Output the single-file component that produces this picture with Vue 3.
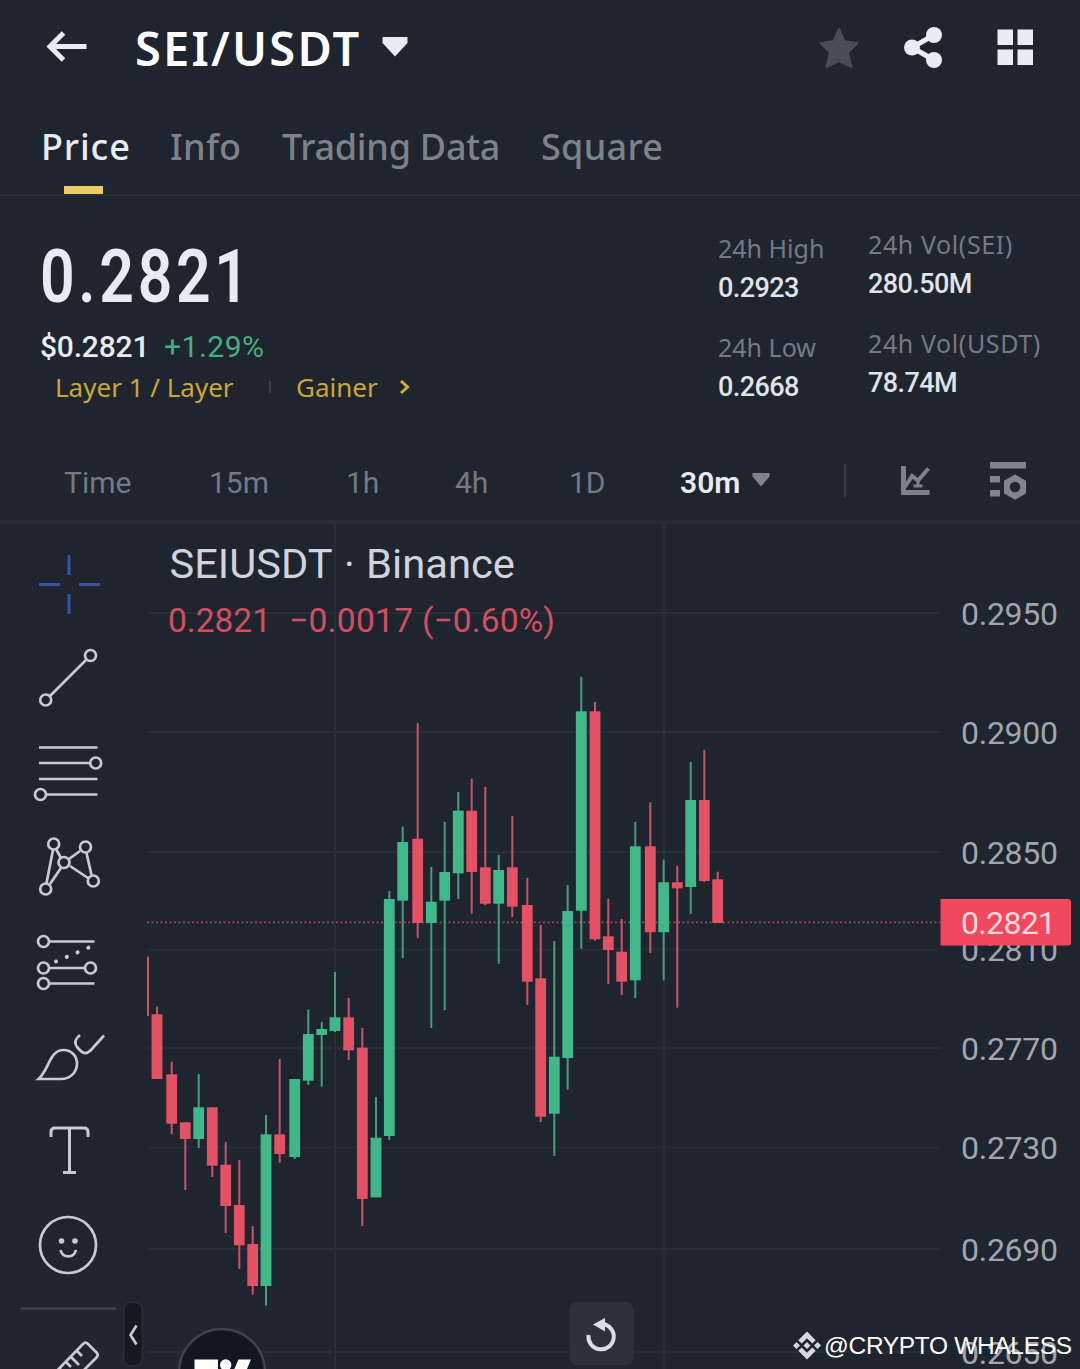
<script setup>
const tabs = ['Price', 'Info', 'Trading Data', 'Square']
const frames = ['Time', '15m', '1h', '4h', '1D']
const stats = [
  [['24h High', '0.2923'], ['24h Low', '0.2668']],
  [['24h Vol(SEI)', '280.50M'], ['24h Vol(USDT)', '78.74M']],
]
const levels = [
  ['0.2950', 613], ['0.2900', 732], ['0.2850', 852], ['0.2810', 949.5],
  ['0.2770', 1048], ['0.2730', 1147.5], ['0.2690', 1249], ['0.2650', 1352],
]
// [x, high, body top, body bottom, low, rising]
const candles = [
  [157, 1006.7, 1014.3, 1079, 1079, 0], [171.7, 1061.7, 1074.3, 1123.7, 1134.3, 0],
  [185.3, 1122.3, 1122.3, 1139, 1190, 0], [198.7, 1074, 1107.3, 1139, 1148, 1],
  [212.3, 1107.3, 1107.3, 1165.7, 1177, 0], [225.7, 1142, 1164.7, 1206, 1233, 0],
  [239.3, 1160, 1205, 1245.3, 1269, 0], [252.7, 1226, 1244, 1286, 1294.7, 0],
  [266, 1115, 1134.3, 1286, 1305.5, 1], [279.7, 1059, 1134.3, 1154, 1162.7, 0],
  [294.7, 1079, 1079, 1157, 1159, 1], [308.3, 1009.5, 1034, 1080.7, 1085, 1],
  [321.7, 1022, 1029, 1035, 1086.7, 1], [335, 972, 1017.3, 1031, 1032, 1],
  [348.7, 998, 1017.3, 1050.3, 1060, 0], [362.3, 1027.7, 1047.7, 1199, 1226, 0],
  [376, 1097, 1137.7, 1197.3, 1197.3, 1], [389.3, 891, 899, 1136, 1140, 1],
  [402.7, 826.7, 842, 900.7, 958, 1], [417.7, 723, 838.7, 923, 938, 0],
  [431.3, 867, 901.7, 923, 1028, 1], [444.7, 822, 872, 900.7, 1010, 1],
  [458.3, 792, 810.7, 873.3, 899, 1], [471.7, 778.7, 810.7, 872, 913.7, 0],
  [485.3, 787, 867.3, 903.7, 905, 0], [498.7, 855, 870, 903.7, 963.7, 1],
  [512.3, 816, 867.3, 906.7, 917, 0], [527.3, 878, 905, 981.7, 1005, 0],
  [540.7, 925, 978.3, 1116.7, 1122, 0], [554.3, 941, 1056.7, 1113.7, 1156, 1],
  [567.7, 885, 911, 1058, 1089.7, 1], [581.3, 676.7, 711.3, 910.7, 948.7, 1],
  [595, 702, 711.3, 939.3, 940.7, 0], [608.3, 898.7, 936.3, 950, 984, 0],
  [621.7, 919, 951.7, 981.7, 995, 0], [635.3, 822, 846.3, 980.3, 998, 1],
  [650.3, 802.3, 846.3, 932.3, 953, 0], [663.7, 859.7, 882.3, 932.3, 980.3, 1],
  [677.3, 865.7, 882.3, 888.3, 1007.7, 0], [690.7, 762, 800, 887, 914, 1],
  [704.3, 750, 800, 881, 882, 0], [717.7, 871.7, 879.3, 923, 923, 0],
]
</script>

<template>
  <div class="screen">
    <header class="topbar">
      <svg class="back" width="42" height="36" viewBox="46 29 42 36"><path d="M86.500 46.500H50M63.500 33 50 46.500l13.500 13.500" fill="none" stroke="#e9ebf2" stroke-width="5" /></svg>
      <h1>SEI/USDT</h1>
      <svg class="caret" width="26" height="20" viewBox="0 0 26 20"><path d="M0.500 0h25v6L13 19.500.500 6z" fill="#e9ebf2" /></svg>
      <svg class="star" width="42" height="42" viewBox="0 0 42 42"><path d="M21 2l5.500 12.300 13 1.700-9.500 9.500 3.500 14.500L21 34 8.500 40l3.500-14.500L2.500 16l13-1.700z" fill="#474d57" stroke="#474d57" stroke-width="2" stroke-linejoin="round" /></svg>
      <svg class="share" width="40" height="42" viewBox="902 25 40 42">
        <path d="M933 34 911 46.500l22 12.500" fill="none" stroke="#eaecf3" stroke-width="5" />
        <g fill="#eaecf3"><circle cx="933" cy="34" r="8" /><circle cx="911" cy="46.500" r="8" /><circle cx="933" cy="59" r="8" /></g>
      </svg>
      <svg class="apps" width="37" height="37" viewBox="0 0 37 37" fill="#e9ebf5"><path d="M0.500.500H16V16H.500zM20.500.500H36V16H20.500zM.500 20.500H16V36H.500zM20.500 20.500H36V36H20.500z" /></svg>
    </header>

    <nav class="tabs">
      <div v-for="(t, i) in tabs" :key="t" class="tab" :class="{ active: i === 0, tight: i === 2 }"><span>{{ t }}</span><i v-if="i === 0"></i></div>
    </nav>

    <section class="summary">
      <div class="quote">
        <div class="price"><b>0.2821</b></div>
        <div class="change"><span class="usd">$0.2821</span><span class="pct">+1.29%</span></div>
        <div class="tags">
          <span class="layer">Layer 1 / Layer</span><i></i><span class="gainer">Gainer</span>
          <svg width="12" height="16" viewBox="0 0 12 16"><path d="M2 2l6.500 6L2 14" fill="none" stroke="#d9ae2c" stroke-width="3" /></svg>
        </div>
      </div>
      <div v-for="(col, c) in stats" :key="c" class="stats" :class="'col' + c">
        <div v-for="s in col" :key="s[0]" class="stat"><div class="label">{{ s[0] }}</div><div class="value">{{ s[1] }}</div></div>
      </div>
    </section>

    <nav class="frames">
      <span v-for="f in frames" :key="f">{{ f }}</span>
      <b>30m</b>
      <svg class="fcaret" width="18" height="14" viewBox="0 0 18 14"><path d="M.500 0h17v3.500L9 13.500.500 3.500z" fill="#7d838d" /></svg>
      <i></i>
      <svg width="32" height="34" viewBox="899 463 32 34" fill="none" stroke="#7b818b">
        <path d="M903.500 465v26.500h26" stroke-width="5" />
        <path d="M905 486l7-11 6 4.500 10.500-12" stroke-width="4" />
        <path d="M918 478v7m-4.500 0h9" stroke-width="3" />
      </svg>
      <svg width="38" height="42" viewBox="989 460 38 42" fill="#7f858f">
        <path d="M990 462h36v6.500h-36zM990 476h10v6.500h-10zM990 490h10v6.500h-10z" />
        <path fill-rule="evenodd" d="M1015 474.500l11 6.300v12.700l-11 6.300-11-6.300v-12.700zM1015 481.800a5.200 5.200 0 1 0 0 10.400 5.200 5.200 0 0 0 0-10.400z" />
      </svg>
    </nav>

    <main class="workspace">
      <aside class="tools">
        <svg width="140" height="108" viewBox="0 524 140 108" class="cross"><path d="M69 555v20M69 594v20M39 584.500h21M79 584.500h21" /></svg>
        <svg width="140" height="93" viewBox="0 632 140 93"><path d="M50 696 86 660" /><circle cx="45.700" cy="700" r="5.500" /><circle cx="90.500" cy="655.500" r="5.500" /></svg>
        <svg width="140" height="95" viewBox="0 725 140 95"><path d="M39 747.500h58.500M39 763h51M39 779h58.500M46 794.500h51.500" /><circle cx="95.700" cy="763" r="5.500" /><circle cx="40.500" cy="794.500" r="5.500" /></svg>
        <svg width="140" height="95" viewBox="0 820 140 95"><path d="M53 850l-6.500 33M56 849l5 9M50 884l11-16M69 859l11-8M86.500 853l5 22M70 866l18 12" /><circle cx="53.700" cy="844" r="5.500" /><circle cx="85.500" cy="847" r="5.500" /><circle cx="64" cy="862.500" r="5.500" /><circle cx="45.700" cy="889" r="5.500" /><circle cx="93.300" cy="881" r="5.500" /></svg>
        <svg width="140" height="95" viewBox="0 915 140 95">
          <path d="M49 941.500h45.500M49 968h36M49 983.500h45.500" /><path d="M56 961.500 90 947" stroke-dasharray="0.100 11.600" stroke-width="4" stroke-linecap="round" />
          <circle cx="43.500" cy="941.500" r="5.500" /><circle cx="43.500" cy="968" r="5.500" /><circle cx="90.500" cy="968" r="5.500" /><circle cx="43.500" cy="983.500" r="5.500" />
        </svg>
        <svg width="140" height="95" viewBox="0 1010 140 95"><path d="M38.500 1079c11-10 11-29 25-29 8 0 13.500 6 13.500 13.500 0 9-7 15.500-16 15.500zM80 1035c-5 4-6 8-3 12 6 7 9 8 14 3l13-14.500" /></svg>
        <svg width="140" height="95" viewBox="0 1105 140 95"><path d="M51 1137v-5q0-4 4-4h29q4 0 4 4v5M69.500 1128v44.500M63 1172.500h13" stroke-width="3" /></svg>
        <svg width="140" height="90" viewBox="0 1200 140 90"><circle cx="68" cy="1245" r="28" /><path d="M60.500 1250c2 8.500 13.500 8.500 15.500 0" /><g fill="#c6cad4" stroke="none"><circle cx="61.500" cy="1241" r="2.800" /><circle cx="75" cy="1241" r="2.800" /></g></svg>
        <svg class="foot" width="140" height="79" viewBox="0 1290 140 79">
          <path d="M21 1308.500h95" stroke="#444a54" stroke-width="2" />
          <path d="M46 1382l37-38q2.500-2.500 5 0l8.500 8.500q2.500 2.500 0 5l-37 37M60 1369l7 7M66 1362l5 5M71 1357l8 8M77 1351l5 5" />
          <rect x="123.500" y="1302" width="19" height="64" rx="8" fill="#121920" stroke="#262d37" stroke-width="2" />
          <path d="M136.500 1325.500l-6 9.500 6 9.500" />
        </svg>
      </aside>

      <svg class="chart" width="940" height="845" viewBox="140 524 940 845">
        <g stroke="#262d37" stroke-width="2">
          <path d="M335 524v845M664 524v845" />
          <path v-for="l in levels" :key="l[0]" :d="`M148 ${l[1]}H940`" />
        </g>
        <path d="M147 922.300H940" stroke="#a04858" stroke-width="1.800" stroke-dasharray="2 2.500" />
        <path d="M148 956.500v59.500" stroke="#cf5063" stroke-width="2" />
        <g v-for="c in candles" :key="c[0]" :class="c[5] ? 'up' : 'down'">
          <path :d="`M${c[0]} ${c[1]}V${c[4]}`" />
          <rect :x="c[0] - 5.400" :y="c[2]" width="10.800" :height="c[3] - c[2]" />
        </g>
        <g class="name">
          <text x="169.500" y="578" textLength="163" lengthAdjust="spacingAndGlyphs">SEIUSDT</text>
          <text x="344" y="578">·</text>
          <text x="366" y="578" textLength="149" lengthAdjust="spacingAndGlyphs">Binance</text>
        </g>
        <g class="delta">
          <text x="168" y="632" textLength="103">0.2821</text>
          <text x="289" y="632" textLength="124">−0.0017</text>
          <text x="422" y="632" textLength="133">(−0.60%)</text>
        </g>
        <g class="axis">
          <text v-for="l in levels" :key="l[0]" x="961" :y="l[1] + 11.700" textLength="97">{{ l[0] }}</text>
        </g>
        <path d="M940.500 899H1068q3 0 3 3v40.500q0 3-3 3H940.500z" fill="#f2485e" />
        <text class="last" x="961" y="933.500" textLength="95">0.2821</text>

        <circle cx="222" cy="1372" r="43" fill="#101720" stroke="#3d434d" stroke-width="2.500" />
        <path d="M194.500 1359.500H218V1385h-12v-15h-11.500zM238.500 1359.500H251l-11 26h-13z" fill="#fff" />
        <circle cx="225.700" cy="1365" r="5.700" fill="#fff" />
        <rect x="569.500" y="1302" width="64" height="63" rx="7" fill="#2a313b" />
        <path d="M588.500 1335a12.700 12.700 0 1 0 14-11" fill="none" stroke="#d9dce3" stroke-width="4" />
        <path d="M593 1324.500l12-6.500v13.500z" fill="#d9dce3" />

        <g fill="#d5d8e0" transform="translate(807 1345.500)">
          <path d="M0-14 8.700-5.300 5.300-2 0-7.300-5.300-2-8.700-5.300zM0 14 8.700 5.300 5.300 2 0 7.300-5.300 2-8.700 5.300z" />
          <path d="M0-3.500 3.500 0 0 3.500-3.500 0zM-10.500-3.500-7 0l-3.500 3.500L-14 0zM10.500-3.500 14 0l-3.500 3.500L7 0z" />
        </g>
        <text class="mark" x="824" y="1354" textLength="248">@CRYPTO WHALESS</text>
      </svg>
    </main>
  </div>
</template>

<style>
body { background: #1e252e; overflow: hidden; }
</style>

<style scoped>
.screen { width: 1080px; height: 1369px; overflow: hidden; background: #1e252e; color: #e9ebf2; font-family: Roboto, sans-serif; display: flex; flex-direction: column; }
svg { display: block; flex: none; }
.topbar { height: 94px; flex: none; display: flex; align-items: center; padding-left: 46px; }
h1 { margin: 2px 0 0 47px; width: 228px; font: 600 47px/60px "Noto Sans", sans-serif; letter-spacing: 2.2px; color: #fff; white-space: nowrap; }
.caret { margin-left: 19px; }
.star { margin-left: 410px; margin-top: 2px; }
.share { margin-left: 43px; }
.apps { margin-left: 54px; }
.tabs { height: 102px; flex: none; box-sizing: border-box; border-bottom: 2px solid #272e38; display: grid; grid-template-columns: 129px 112px 259px auto; padding: 27px 0 0 41px; }
.tab { font: 500 36px/52px "Noto Sans", sans-serif; letter-spacing: .3px; color: #7c828c; white-space: nowrap; }
.tight { letter-spacing: -.25px; }
.active { color: #e9ebf2; letter-spacing: .9px; }
.tab i { display: block; width: 39px; height: 8px; margin: 13px 0 0 23px; background: #e9cd62; }
.summary { height: 246px; flex: none; display: flex; }
.quote { width: 718px; padding: 41px 0 0 40px; box-sizing: border-box; }
.price { height: 80px; font-size: 74px; line-height: 80px; }
.price b { display: inline-block; font-weight: 600; letter-spacing: 4.5px; transform: scaleX(.82); transform-origin: 0 50%; }
.change { display: flex; margin-top: 10px; font-size: 30px; line-height: 40px; }
.usd { width: 124px; font-weight: 500; letter-spacing: -.2px; }
.pct { color: #48ad80; letter-spacing: .5px; }
.tags { display: flex; align-items: center; height: 40px; padding-left: 15px; font: 400 26px/40px "Noto Sans", sans-serif; color: #cda636; white-space: nowrap; }
.layer { width: 214px; }
.tags i { width: 2px; height: 12px; background: #3a414b; }
.gainer { width: 103px; margin-left: 25px; }
.stats { display: flex; flex-direction: column; gap: 19px; }
.col0 { width: 150px; padding-top: 32px; }
.col1 { padding-top: 28px; }
.label { font: 400 25px/40px "Noto Sans", sans-serif; color: #737a84; white-space: nowrap; }
.col1 .label { letter-spacing: .6px; }
.value { font-size: 27px; line-height: 40px; font-weight: 500; letter-spacing: -.6px; color: #e0e3ea; }
.frames { height: 82px; flex: none; box-sizing: border-box; border-bottom: 4px solid #252c36; display: grid; grid-template-columns: 145px 137px 109px 114px 111px 72px 92px 55px 90px 38px; align-items: center; padding: 3px 0 0 64px; font-size: 30px; color: #747a85; }
.frames b { color: #e9ebf2; font-weight: 600; }
.frames i { width: 2px; height: 33px; margin-bottom: 4px; background: #343b45; }
.frames svg { margin-bottom: 4px; }
.frames .fcaret { margin-bottom: 6px; }
.workspace { display: flex; flex: none; height: 845px; }
.tools { width: 140px; display: flex; flex-direction: column; position: relative; z-index: 1; }
.tools svg { fill: none; stroke: #c6cad4; stroke-width: 2.7; }
.tools .foot { overflow: visible; }
.tools .cross { stroke: #3555a8; stroke-width: 3; }
.up { fill: #41b88a; stroke: none; }
.down { fill: #e45064; stroke: none; }
.up path { stroke: #469c7e; stroke-width: 2; }
.down path { stroke: #c95366; stroke-width: 2; }
.name { font-size: 41px; fill: #cfd3dc; }
.delta { font-size: 33.5px; fill: #d44d60; }
.axis { font-size: 32px; fill: #a0a5b0; }
.last { font-size: 32px; fill: #ffd9de; }
.mark { font: 24.500px "Liberation Sans", sans-serif; fill: #fff; }
</style>
